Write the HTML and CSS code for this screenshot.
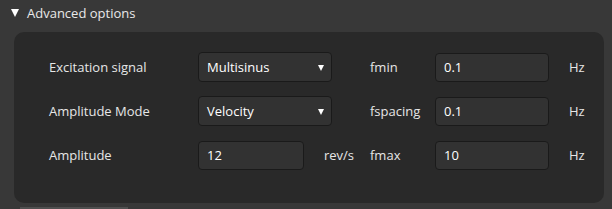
FILE: index.html
```html
<!DOCTYPE html>
<html lang="en">
<head>
  <meta charset="UTF-8" />
  <title>Advanced options</title>
  <link rel="stylesheet" href="styles.css">
</head>
<body>

  <div class="section-title">
    <span class="caret"></span>Advanced options
  </div>

  <div class="panel">
    <div class="grid">
      <label class="label">Excitation signal</label>
      <div class="field">
        <div class="select">Multisinus <span class="arrow"></span></div>
      </div>
      <label class="label">fmin</label>
      <input class="input" type="text" value="0.1">
      <span class="unit">Hz</span>

      <label class="label">Amplitude Mode</label>
      <div class="field">
        <div class="select">Velocity <span class="arrow"></span></div>
      </div>
      <label class="label">fspacing</label>
      <input class="input" type="text" value="0.1">
      <span class="unit">Hz</span>

      <label class="label">Amplitude</label>
      <div class="field">
        <input class="input short" type="text" value="12">
        <span class="unit">rev/s</span>
      </div>
      <label class="label">fmax</label>
      <input class="input" type="text" value="10">
      <span class="unit">Hz</span>
    </div>
  </div>

  <div class="tab-strip"></div>

</body>
</html>
```

FILE: styles.css
```css
* {
  box-sizing: border-box;
  margin: 0;
  padding: 0;
}

body {
  font-family: "Open Sans", "Noto Sans", sans-serif;
  font-size: 13px;
  background: #383838;
  color: #e6e6e6;
  width: 612px;
  height: 209px;
  overflow: hidden;
}

.section-title {
  display: flex;
  align-items: center;
  height: 32px;
  padding: 0 0 7px 11px;
  font-size: 13px;
  color: #e8e8e8;
}

.caret {
  width: 0;
  height: 0;
  border-left: 4.5px solid transparent;
  border-right: 4.5px solid transparent;
  border-top: 8px solid #fff;
  margin-right: 8px;
}

.panel {
  margin-left: 14px;
  width: 590px;
  height: 171px;
  background: #292929;
  border-radius: 10px;
  padding: 20px 0 0 35px;
}

.grid {
  display: grid;
  grid-template-columns: 149px 172px 65px 114px auto;
  grid-auto-rows: 30px;
  row-gap: 14px;
  align-items: center;
}

.field {
  display: flex;
  align-items: center;
  height: 30px;
}

.select,
.input {
  height: 30px;
  background: #323232;
  border: 1px solid #1a1a1a;
  border-radius: 4px;
  color: #fff;
  font-family: inherit;
  font-size: 13px;
  padding: 0 8px;
  outline: none;
}

.select {
  position: relative;
  width: 134px;
  line-height: 28px;
  font-weight: 500;
}

.arrow {
  position: absolute;
  right: 7px;
  top: 12px;
  border-left: 3px solid transparent;
  border-right: 3px solid transparent;
  border-top: 6px solid #fff;
}

.input {
  width: 114px;
  height: 29px;
}

.input.short {
  width: 106px;
}

.unit {
  padding-left: 20px;
}

.tab-strip {
  margin: 4px 0 0 20px;
  width: 108px;
  height: 3px;
  background: #505050;
}
```
